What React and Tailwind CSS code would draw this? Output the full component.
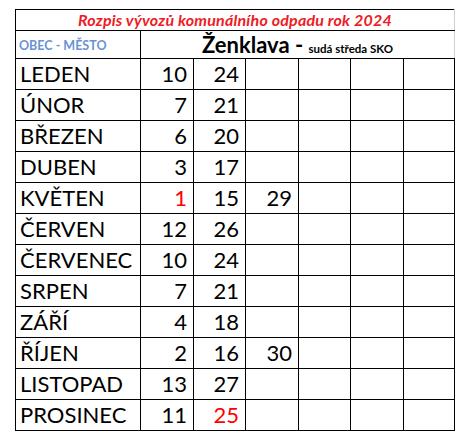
const rows = [
  ["LEDEN", "10", "24", ""],
  ["ÚNOR", "7", "21", ""],
  ["BŘEZEN", "6", "20", ""],
  ["DUBEN", "3", "17", ""],
  ["KVĚTEN", "1", "15", "29"],
  ["ČERVEN", "12", "26", ""],
  ["ČERVENEC", "10", "24", ""],
  ["SRPEN", "7", "21", ""],
  ["ZÁŘÍ", "4", "18", ""],
  ["ŘÍJEN", "2", "16", "30"],
  ["LISTOPAD", "13", "27", ""],
  ["PROSINEC", "11", "25", ""],
];

// cells highlighted in red in the sheet
const red = { "KVĚTEN-1": true, "PROSINEC-2": true };

export default function App() {
  return (
    <div className="min-h-screen bg-white pl-[15px] pt-[9px] font-['Lato','Open_Sans',sans-serif] text-black">
      <table className="table-fixed border-collapse w-[439px]">
        <colgroup>
          <col className="w-[125px]" />
          <col className="w-[53px]" />
          <col className="w-[52px]" />
          <col className="w-[53px]" />
          <col className="w-[52px]" />
          <col className="w-[53px]" />
          <col className="w-[51px]" />
        </colgroup>
        <tbody>
          <tr className="h-[21px]">
            <td
              colSpan={7}
              className="border border-black border-r-[#d0d0d0] p-0 text-center text-[16px] leading-none font-bold italic text-[#ee1c25] tracking-[0.2px]"
            >
              Rozpis vývozů komunálního odpadu rok 2024
            </td>
          </tr>
          <tr className="h-[28px]">
            <td className="border border-black px-[3px] py-0 text-[12.5px] font-bold text-[#6a93d4] leading-none pt-[3px]">
              OBEC - MĚSTO
            </td>
            <td
              colSpan={6}
              className="border border-black border-r-[#d0d0d0] p-0 text-center font-bold leading-none"
            >
              <span className="text-[22px]">Ženklava - </span>
              <span className="text-[11.5px]">sudá středa SKO</span>
            </td>
          </tr>
          {rows.map(([m, a, b, c]) => (
            <tr key={m} className="h-[31px]">
              <td className="border border-black px-[4px] py-0 text-[22px] leading-none">{m}</td>
              {[a, b, c, "", "", ""].map((v, i) => (
                <td
                  key={i}
                  className={
                    "border border-black py-0 pl-0 pr-[6px] text-right text-[22px] leading-none " +
                    (red[m + "-" + (i + 1)] ? "text-[#ff0000]" : "")
                  }
                >
                  {v}
                </td>
              ))}
            </tr>
          ))}
        </tbody>
      </table>
    </div>
  );
}
